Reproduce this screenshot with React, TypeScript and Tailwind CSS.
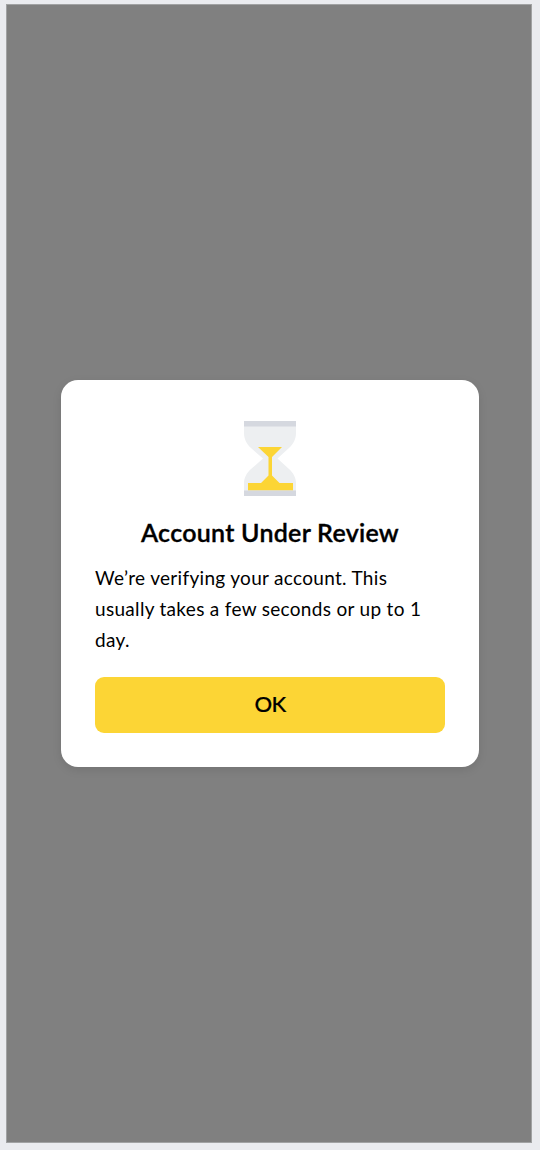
function Hourglass() {
  return (
    <svg width="52" height="75" viewBox="0 0 52 75" className="mx-auto block" aria-hidden="true">
      <path
        d="M0 5H52V12C52 18 49.500 23 45 27L33.500 37.500L45 48C49.500 52 52 57 52 62V70H0V62C0 57 2.500 52 7 48L19 37.500L7 27C2.500 23 0 18 0 12Z"
        fill="#edeff1"
      />
      <path
        d="M14 26H38L28 36V54.500L35.500 62H49V69.500H4V62H17L24.500 54.500V36Z"
        fill="#fcd535"
      />
      <path d="M0 0H52V5.500H0ZM0 69.500H52V75H0Z" fill="#d5d8df" />
    </svg>
  );
}

export default function App() {
  return (
    <div className="h-[1150px] w-[540px] bg-[#eaebef] pt-1 pl-1.5 font-['Lato',sans-serif] text-black">
      <main className="flex h-[1139px] w-[526px] flex-col items-start border border-[#a1a2a3] bg-[#808080] pt-[375px] pl-[54px]">
        <section
          role="dialog"
          aria-labelledby="title"
          className="flex h-[387px] w-[418px] flex-col rounded-[17px] bg-white px-[34px] pt-[41px] shadow-[0_3px_10px_rgba(0,0,0,0.1)]"
        >
          <Hourglass />
          <h1
            id="title"
            className="mt-[20px] text-center text-[25px] leading-[32px] font-semibold tracking-[0.27px] whitespace-nowrap [-webkit-text-stroke:0.35px_black]"
          >
            Account Under Review
          </h1>
          <p className="mt-[14px] text-[19px] leading-[31px] tracking-[0.31px] whitespace-nowrap">
            <span className="block">We’re verifying your account. This</span>
            <span className="block">usually takes a few seconds or up to 1</span>
            <span className="block">day.</span>
          </p>
          <button className="mt-[22px] h-[56px] w-[350px] rounded-[9px] bg-[#fcd535] pb-[2px] text-[22px] leading-[54px] font-medium tracking-[-0.8px] [-webkit-text-stroke:0.2px_black]">
            OK
          </button>
        </section>
      </main>
    </div>
  );
}
